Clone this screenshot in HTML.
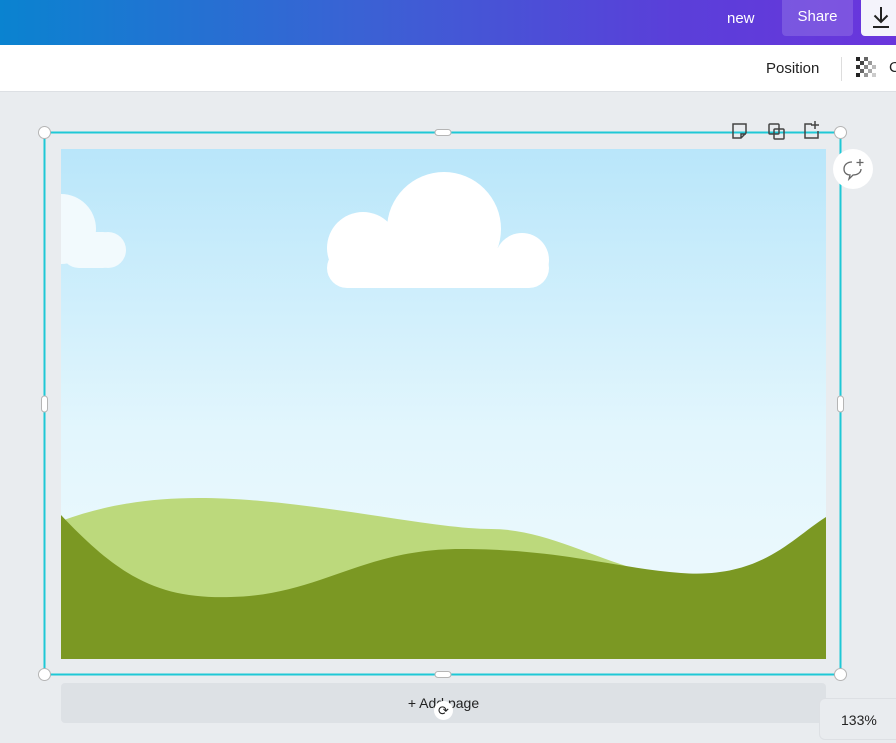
<!DOCTYPE html>
<html><head><meta charset="utf-8"><style>
*{margin:0;padding:0;box-sizing:border-box}
body{width:896px;height:743px;overflow:hidden;background:#e9ecef;font-family:"Liberation Sans",sans-serif;position:relative}
.top{position:absolute;left:0;top:0;width:896px;height:45px;background:linear-gradient(90deg,#0a83d0 0%,#3a62d4 40%,#5a3fd9 75%,#6a35dc 100%)}
.bar{position:absolute;left:0;top:45px;width:896px;height:47px;background:#fff;border-bottom:1px solid #dde0e4}
.abs{position:absolute}
</style></head><body>
<div class="top">
 <div class="abs" style="left:727px;top:10px;color:#fff;font-size:15px">new</div>
 <div class="abs" style="left:782px;top:0;width:71px;height:36px;background:rgba(255,255,255,0.15);border-radius:0 0 4px 4px;color:#fff;font-size:15px;text-align:center;line-height:34px">Share</div>
 <div class="abs" style="left:861px;top:0;width:40px;height:36px;background:#f4f3fb;border-radius:0 0 0 4px">
  <svg width="40" height="36" viewBox="0 0 40 36"><path d="M20 7v15M13.5 15.5l6.5 6.5 6.5-6.5M12 27h16" stroke="#222" stroke-width="2" fill="none"/></svg>
 </div>
</div>
<div class="bar">
 <div class="abs" style="left:766px;top:15px;font-size:15px;color:#222">Position</div>
 <div class="abs" style="left:841px;top:12px;width:1px;height:24px;background:#ddd"></div>
 <svg class="abs" style="left:856px;top:12px" width="20" height="20" viewBox="0 0 20 20">
  <g fill="#222"><rect x="0" y="0" width="4" height="4"/><rect x="8" y="0" width="4" height="4" fill="#666"/><rect x="4" y="4" width="4" height="4" fill="#444"/><rect x="12" y="4" width="4" height="4" fill="#999"/><rect x="0" y="8" width="4" height="4" fill="#333"/><rect x="8" y="8" width="4" height="4" fill="#888"/><rect x="16" y="8" width="4" height="4" fill="#bbb"/><rect x="4" y="12" width="4" height="4" fill="#666"/><rect x="12" y="12" width="4" height="4" fill="#aaa"/><rect x="0" y="16" width="4" height="4"/><rect x="8" y="16" width="4" height="4" fill="#999"/><rect x="16" y="16" width="4" height="4" fill="#ccc"/></g>
 </svg>
 <div class="abs" style="left:889px;top:14px;font-size:15px;color:#222">C</div>
</div>

<svg class="abs" style="left:61px;top:149px" width="765" height="510" viewBox="0 0 765 510">
 <defs><linearGradient id="sky" x1="0" y1="0" x2="0" y2="1"><stop offset="0" stop-color="#b9e6fa"/><stop offset="0.55" stop-color="#e2f6fd"/><stop offset="1" stop-color="#f0fafd"/></linearGradient></defs>
 <rect width="765" height="510" fill="url(#sky)"/>
 <g fill="#fff"><circle cx="383" cy="80" r="57"/><circle cx="302" cy="99" r="36"/><circle cx="461" cy="111" r="27"/><rect x="266" y="99" width="222" height="40" rx="20"/></g>
 <g fill="#f2fafd"><circle cx="0" cy="80" r="35"/><circle cx="47" cy="101" r="18"/><rect x="0" y="83" width="60" height="36" rx="18"/></g>
 <path d="M0 372 C60 350 120 345 200 352 C290 360 380 380 430 380 C500 380 560 430 640 430 L765 430 L765 510 L0 510Z" fill="#bcd97c"/>
 <path d="M0 366 C60 430 100 450 170 448 C260 446 300 400 400 400 C500 400 560 420 620 424 C700 430 730 390 765 368 L765 510 L0 510Z" fill="#7b9823"/>
</svg>

<svg class="abs" style="left:0;top:0" width="896" height="743">
 <rect x="44.5" y="132.5" width="796" height="542" fill="none" stroke="#1ec8d6" stroke-width="2"/>
 <g fill="#fff" stroke="#b5b5b5"><circle cx="44.5" cy="132.5" r="6"/><circle cx="840.5" cy="132.5" r="6"/><circle cx="44.5" cy="674.5" r="6"/><circle cx="840.5" cy="674.5" r="6"/>
 <rect x="435" y="129.5" width="16" height="6" rx="3"/><rect x="435" y="671.5" width="16" height="6" rx="3"/><rect x="41.5" y="396" width="6" height="16" rx="3"/><rect x="837.5" y="396" width="6" height="16" rx="3"/></g>
 <g fill="none" stroke="#444" stroke-width="1.5">
  <path d="M733 124h13v9l-5 5h-8z M741 138v-4h5"/>
  <rect x="769" y="124" width="10" height="10" rx="1"/><rect x="774" y="129" width="10" height="10" rx="1"/>
  <path d="M812 124h-7v14h13v-7 M815 121v8 M811 125h8"/>
 </g>
 <circle cx="853" cy="169" r="20" fill="#fff"/>
 <path d="M852 162c-5 0-8 3-8 7s3 6 6 6l-1 4 4-4c4 0 8-2 8-6" fill="none" stroke="#666" stroke-width="1.3"/>
 <path d="M860 159v7M856.5 162.5h7" stroke="#666" stroke-width="1.3"/>
</svg>

<div class="abs" style="left:61px;top:683px;width:765px;height:40px;background:#dde1e5;border-radius:4px;text-align:center;line-height:40px;font-size:14px;color:#222">+ Add page</div>
<div class="abs" style="left:434px;top:701px;width:19px;height:19px;border-radius:50%;background:#fff;text-align:center;line-height:19px;font-size:13px;color:#222">⟳</div>
<div class="abs" style="left:819px;top:698px;width:90px;height:42px;background:#e9ecef;border:1px solid #dde0e4;border-radius:6px;font-size:14px;color:#222;padding:13px 0 0 21px">133%</div>
</body></html>
